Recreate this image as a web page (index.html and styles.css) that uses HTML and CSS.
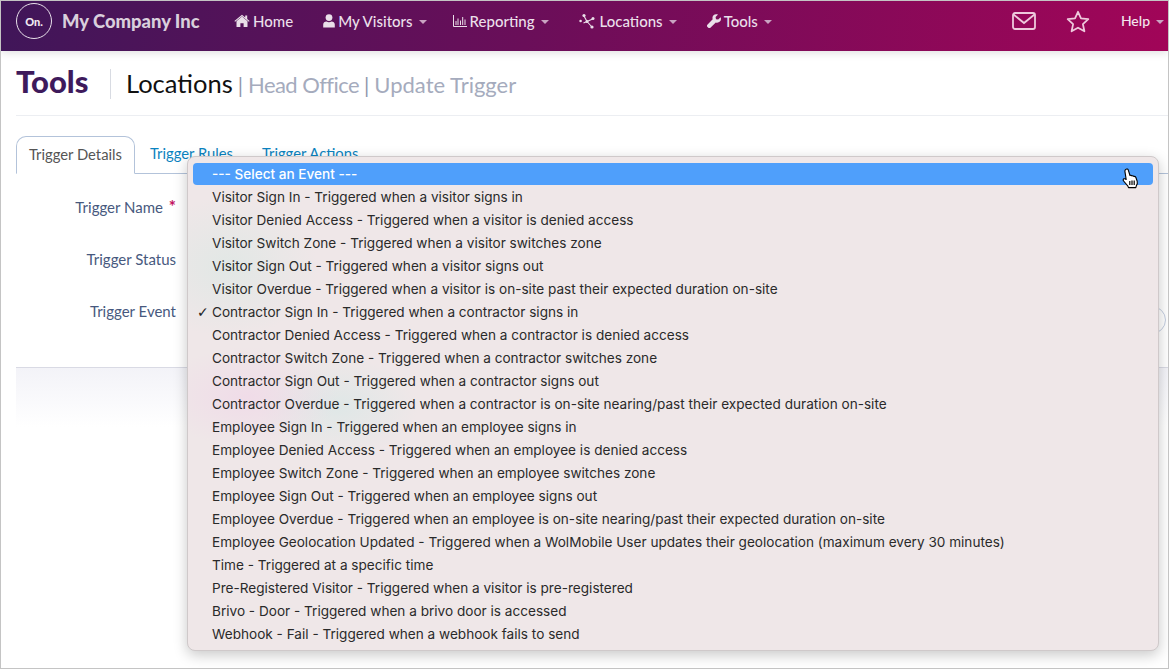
FILE: index.html
```html
<!DOCTYPE html>
<html lang="en">
<head>
<meta charset="utf-8">
<title>Update Trigger</title>
<link rel="stylesheet" href="styles.css">
</head>
<body>
<div class="page">
  <nav class="nav">
    <div class="logo">On.</div>
    <div class="brand">My Company Inc</div>
    <a class="nav-item home">
      <svg class="ic" width="16" height="14" viewBox="0 0 16 14"><path d="M8 2.6 2.5 7.2V12.6a.5.5 0 0 0 .5.5h3.4V9.2h3.2v3.900H13a.5.5 0 0 0 .5-.5V7.200z" fill="currentColor"/><path d="M.4 7 8 .8 11.200 3.400V1.600h2v3.400L15.600 7l-.7.8L8 2.200 1.100 7.800z" fill="currentColor"/></svg>
      Home</a>
    <a class="nav-item visitors">
      <svg class="ic" width="12" height="14" viewBox="0 0 12 14"><circle cx="6" cy="3.6" r="3.4" fill="currentColor"/><path d="M.2 13.4V10.6C.2 8.6 1.8 7.4 3.4 7.4c.8.5 1.7.8 2.6.8s1.800-.3 2.600-.8c1.600 0 3.200 1.200 3.200 3.200v2.800z" fill="currentColor"/></svg>
      My Visitors<span class="caret"></span></a>
    <a class="nav-item reporting">
      <svg class="ic" width="14" height="12" viewBox="0 0 14 12"><path d="M.5 0v11.500H14M3 6v4M5 3.500V10M7.500 5.500V10M9.700 2V10M12 4.500V10" fill="none" stroke="currentColor" stroke-width="1"/></svg>
      Reporting<span class="caret"></span></a>
    <a class="nav-item locations">
      <svg class="ic" width="18" height="16" viewBox="0 0 18 16"><path d="M5 3 8 8.500 13.500 6M8 8.500 12.500 13.500M8 8.500 4.500 10" fill="none" stroke="currentColor" stroke-width="1.100"/><circle cx="5" cy="2.500" r="1.600" fill="currentColor"/><circle cx="14" cy="5.500" r="1.500" fill="currentColor"/><circle cx="13" cy="14" r="1.600" fill="currentColor"/><circle cx="1.600" cy="8" r="1.300" fill="currentColor"/><circle cx="8" cy="8.500" r="1.500" fill="currentColor"/></svg>
      Locations<span class="caret"></span></a>
    <a class="nav-item tools">
      <svg class="ic" width="14" height="14" viewBox="0 0 14 14"><path d="M13.600 3.200 11.200 5.600 9 5.200 8.600 3 11 .6C9.400-.2 7.600.1 6.500 1.200 5.400 2.300 5.200 3.900 5.700 5.300L.6 10.400a1.900 1.900 0 0 0 0 2.700l.4.400a1.900 1.900 0 0 0 2.700 0L8.800 8.400c1.400.5 3 .2 4.100-.9 1.100-1.100 1.400-2.800.7-4.300z" fill="currentColor"/></svg>
      Tools<span class="caret"></span></a>
    <a class="nav-icon mail">
      <svg width="24" height="18" viewBox="0 0 24 18"><rect x="1" y="1" width="22" height="16" rx="2" fill="none" stroke="currentColor" stroke-width="1.800"/><path d="M1.500 2.500 12 11 22.500 2.500" fill="none" stroke="currentColor" stroke-width="1.800"/></svg>
    </a>
    <a class="nav-icon star">
      <svg width="24" height="23" viewBox="0 0 24 23"><path d="M12 1.800 15 8.400 22.300 9.200 16.900 14.100 18.400 21.300 12 17.700 5.600 21.300 7.100 14.100 1.700 9.200 9 8.400z" fill="none" stroke="currentColor" stroke-width="1.800" stroke-linejoin="round"/></svg>
    </a>
    <a class="nav-item help">Help<span class="caret"></span></a>
  </nav>

  <header class="title-bar">
    <h1 class="section">Tools</h1>
    <div class="crumbs">
      <span class="crumb-main">Locations</span>
      <span class="sep">|</span>
      <span class="crumb office">Head Office</span>
      <span class="sep">|</span>
      <span class="crumb">Update Trigger</span>
    </div>
  </header>

  <div class="tabs">
    <a class="tab active">Trigger Details</a>
    <a class="tab">Trigger Rules</a>
    <a class="tab">Trigger Actions</a>
  </div>

  <form class="form">
    <div class="row"><label class="label">Trigger Name <span class="req">*</span></label></div>
    <div class="row"><label class="label">Trigger Status</label></div>
    <div class="row"><label class="label">Trigger Event</label><div class="pill"></div></div>
  </form>
  <div class="footer-band"></div>

  <div class="menu">
    <div class="opt selected">--- Select an Event ---</div>
    <div class="opt">Visitor Sign In - Triggered when a visitor signs in</div>
    <div class="opt">Visitor Denied Access - Triggered when a visitor is denied access</div>
    <div class="opt">Visitor Switch Zone - Triggered when a visitor switches zone</div>
    <div class="opt">Visitor Sign Out - Triggered when a visitor signs out</div>
    <div class="opt">Visitor Overdue - Triggered when a visitor is on-site past their expected duration on-site</div>
    <div class="opt checked">Contractor Sign In - Triggered when a contractor signs in</div>
    <div class="opt">Contractor Denied Access - Triggered when a contractor is denied access</div>
    <div class="opt">Contractor Switch Zone - Triggered when a contractor switches zone</div>
    <div class="opt">Contractor Sign Out - Triggered when a contractor signs out</div>
    <div class="opt">Contractor Overdue - Triggered when a contractor is on-site nearing/past their expected duration on-site</div>
    <div class="opt">Employee Sign In - Triggered when an employee signs in</div>
    <div class="opt">Employee Denied Access - Triggered when an employee is denied access</div>
    <div class="opt">Employee Switch Zone - Triggered when an employee switches zone</div>
    <div class="opt">Employee Sign Out - Triggered when an employee signs out</div>
    <div class="opt">Employee Overdue - Triggered when an employee is on-site nearing/past their expected duration on-site</div>
    <div class="opt">Employee Geolocation Updated - Triggered when a WolMobile User updates their geolocation (maximum every 30 minutes)</div>
    <div class="opt">Time - Triggered at a specific time</div>
    <div class="opt">Pre-Registered Visitor - Triggered when a visitor is pre-registered</div>
    <div class="opt">Brivo - Door - Triggered when a brivo door is accessed</div>
    <div class="opt">Webhook - Fail - Triggered when a webhook fails to send</div>
  </div>
  <svg class="cursor" width="17" height="21" viewBox="0 0 17 21"><path d="M4 1.200c1-.6 2 0 2.300 1L8 7.500c.8-.4 1.600-.2 2 .4.800-.3 1.500 0 1.900.6.800-.2 1.500.1 1.900.8l1.400 4c.4 1.500 0 3-.8 4.300l-.6 2H6.500l-.6-1.500L1.600 13c-.7-.8-.5-1.800.3-2.200.7-.3 1.500 0 2.300.7L2.900 3.300C2.700 2.400 3.200 1.600 4 1.200z" fill="#fff" stroke="#000" stroke-width="1.100" stroke-linejoin="round"/><path d="M7.800 13v4M10 12.500v4.500M12.200 12.500v4.500" stroke="#000" stroke-width="1.200"/></svg>
</div>
</body>
</html>
```
FILE: styles.css
```css
* { box-sizing: border-box; }
html, body { margin: 0; padding: 0; height: 100%; background: #fff; overflow: hidden; }
.page {
  position: relative;
  width: 1169px;
  height: 669px;
  border: 1px solid #c4c4c4;
  overflow: hidden;
  font-family: Lato, "Open Sans", sans-serif;
  background: #fff;
}
.nav {
  height: 50px;
  display: flex;
  align-items: center;
  padding: 0 0 10px 15px;
  background: linear-gradient(95deg, #401659 0%, #6a0e59 45%, #a10558 100%);
  box-shadow: 0 2px 8px rgba(0,0,0,.12);
  color: #eadfe9;
  font-size: 15px;
  font-weight: 500;
}
.logo {
  flex: none;
  width: 36px;
  height: 36px;
  border: 1.500px solid #e8e0ea;
  border-radius: 50%;
  display: flex;
  align-items: center;
  justify-content: center;
  font-size: 11px;
  font-weight: 900;
  color: #f2ecf3;
}
.brand { flex: none; margin-left: 10px; font-size: 18.4px; font-weight: 900; color: #d9cfdc; width: 172px; white-space: nowrap; }
.nav-item { flex: none; display: flex; align-items: center; white-space: nowrap; margin-bottom: 1px; }
.ic { margin-right: 3px; flex: none; }
.caret {
  width: 0; height: 0;
  margin-left: 6px;
  margin-top: 2px;
  border-left: 4px solid transparent;
  border-right: 4px solid transparent;
  border-top: 4px solid #c9a4c2;
}
.visitors { margin-left: 30px; }
.reporting { margin-left: 26px; }
.locations { margin-left: 30px; }
.tools { margin-left: 30px; }
.nav-icon { flex: none; display: flex; color: #eec9dc; }
.mail { margin-left: 240px; }
.star { margin-left: 30px; }
.help { margin-left: 31px; color: #f3e6ee; font-size: 14px; }

.title-bar {
  margin: 0 0 0 15px;
  height: 65px;
  display: flex;
  align-items: center;
  border-bottom: 1px solid #eceef2;
}
.section {
  width: 95px;
  height: 30px;
  line-height: 24px;
  font-size: 31px;
  font-weight: 900;
  color: #3e1a5c;
  border-right: 1px solid #d8dbe2;
  margin: 2px 15px 0 0;
  flex: none;
}
.crumbs { display: flex; align-items: baseline; font-size: 22px; color: #a5abbd; white-space: nowrap; }
.crumb-main { color: #111; font-size: 25.500px; }
.office { letter-spacing: -.55px; }
.sep { color: #8f96ab; font-size: 21px; margin: 0 5px; }
.tabs {
  margin: 20px 0 0 15px;
  height: 38px;
  display: flex;
  border-bottom: 1px solid #b3c3da;
  font-size: 14.800px;
}
.tab { padding: 0 14px 0 15px; line-height: 35px; color: #0b83c0; }
.tab.active {
  height: 38px;
  color: #555;
  padding: 0 12px;
  border: 1px solid #b3c3da;
  border-bottom: 1px solid #fff;
  border-radius: 10px 10px 0 0;
  background: #fff;
}
.form { margin-left: 15px; height: 193px; padding-top: 6px; }
.row { height: 52px; display: flex; align-items: center; position: relative; }
.label { width: 160px; text-align: right; color: #47597e; font-size: 15px; line-height: 20px; padding-top: 1px; white-space: nowrap; }
.req { color: #c2105f; font-size: 17px; font-weight: 700; margin-left: 2px; }
.pill {
  position: absolute;
  right: 2px; top: 22px;
  height: 28px; width: 200px;
  border: 1px solid #c3cde0;
  border-radius: 14px;
}
.footer-band {
  margin-left: 15px;
  height: 60px;
  border-top: 1px solid #d9dae4;
  background: linear-gradient(#f3f3f8, #fff);
}
.menu {
  position: absolute;
  left: 186px;
  top: 155px;
  width: 972px;
  height: 495px;
  padding: 6px 5px;
  border: 1px solid #cfc9ca;
  border-radius: 8px;
  background:
    radial-gradient(ellipse 90px 70px at 40px 110px, rgba(205,232,225,.4), transparent),
    radial-gradient(ellipse 90px 50px at 60px 240px, rgba(240,215,232,.7), transparent),
    radial-gradient(ellipse 80px 50px at 150px 250px, rgba(210,232,230,.55), transparent),
    #efe7e8;
  box-shadow: 0 4px 14px rgba(0,0,0,.22);
  font-family: Inter, "Liberation Sans", sans-serif;
  font-size: 13.600px;
  color: #2a2a2a;
}
.opt { height: 23px; line-height: 23px; padding-left: 19px; white-space: nowrap; position: relative; }
.opt.selected { height: 22px; line-height: 22px; margin-bottom: 1px; background: #4f9ffb; color: #fff; border-radius: 4px; font-weight: 500; }
.opt.checked::before { content: "\2713"; position: absolute; left: 4px; font-size: 14px; font-weight: 700; color: #222; font-family: "DejaVu Sans", sans-serif; }
.cursor { position: absolute; left: 1121px; top: 167px; }
```
